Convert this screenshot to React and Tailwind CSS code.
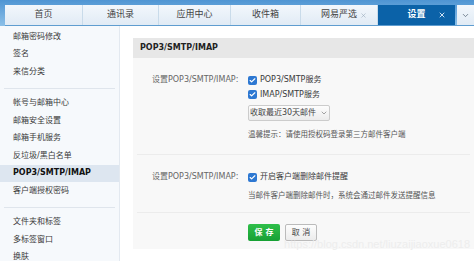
import { ChevronDown, X, Check } from "lucide-react";

const font = { fontFamily: '"DejaVu Sans", "Noto Sans CJK SC", sans-serif' };

const tabs = [
  { name: "首页", w: "w-[78px]" },
  { name: "通讯录", w: "w-[76px]" },
  { name: "应用中心", w: "w-[72px]" },
  { name: "收件箱", w: "w-[70px]" },
  { name: "网易严选", w: "w-[77px]", close: true },
];

const groups = [
  ["邮箱密码修改", "签名", "来信分类"],
  ["帐号与邮箱中心", "邮箱安全设置", "邮箱手机服务", "反垃圾/黑白名单", "POP3/SMTP/IMAP", "客户端授权密码"],
  ["文件夹和标签", "多标签窗口", "换肤"],
];

function Box() {
  return (
    <span className="flex h-[9px] w-[9px] shrink-0 items-center justify-center rounded-[2px] bg-[#2d78d2]">
      <Check size={7} strokeWidth={4} className="text-white" />
    </span>
  );
}

export default function App() {
  return (
    <div style={font} className="h-[261px] w-[474px] overflow-hidden bg-white text-[8px] text-[#3a3a3a]">
      <div className="flex h-[26px] items-end bg-gradient-to-b from-[#4f95d3] to-[#8cc0e8] pl-[5px]">
        <div className="flex h-[21px] flex-1 border-b border-[#5f9dd0]">
          {tabs.map((t) => (
            <div
              key={t.name}
              className={`relative flex ${t.w} items-center justify-center border-r border-[#c9dbea] bg-gradient-to-b from-[#f2f7fc] to-[#e1ebf5] text-[9px] text-[#444]`}
            >
              {t.name}
              {t.close && <X size={7} className="absolute right-[10px] text-[#9ab]" />}
            </div>
          ))}
          <div className="relative flex w-[77px] items-center justify-center bg-[#0b62a8] text-[9px] font-bold text-white">
            设置
            <X size={8} strokeWidth={3} className="absolute right-[9px] text-[#cfe2f3]" />
          </div>
          <div className="ml-[2px] flex flex-1 items-center justify-center bg-gradient-to-b from-[#f2f7fc] to-[#e1ebf5]">
            <ChevronDown size={9} className="text-[#567]" />
          </div>
        </div>
      </div>
      <div className="flex">
        <div className="w-[120px] shrink-0 border-r border-[#e3e9f0] bg-[#f6f9fc] pt-[2px]">
          {groups.map((g, i) => (
            <div key={i} className={i > 0 ? "mx-[4px] border-t border-[#dfe5ec] pt-[6px]" : "mx-[4px]"}>
              {g.map((item) => (
                <div
                  key={item}
                  className={`flex h-[17.5px] items-center whitespace-nowrap pl-[9px] ${
                    item === "POP3/SMTP/IMAP" ? "-mx-[4px] bg-[#dde6f0] pl-[13px] font-bold text-[#111]" : ""
                  }`}
                >
                  {item}
                </div>
              ))}
              {i < 2 && <div className="h-[7px]" />}
            </div>
          ))}
        </div>
        <div className="flex-1 pl-[13px] pt-[12px]">
          <div className="bg-[#f8f8f8]">
            <div className="flex h-[20px] items-center bg-[#e7e7e7] pl-[7px] font-bold text-[#222]">
              POP3/SMTP/IMAP
            </div>
            <div className="flex pt-[15px]">
              <div className="flex h-[14px] w-[115px] items-center whitespace-nowrap pl-[19px] text-[#666]">设置POP3/SMTP/IMAP:</div>
              <div className="flex flex-col whitespace-nowrap">
                <label className="flex h-[14px] items-center gap-[3px]"><Box />POP3/SMTP服务</label>
                <label className="flex h-[15px] items-center gap-[3px]"><Box />IMAP/SMTP服务</label>
                <div className="mt-[3px] flex h-[16px] w-[82px] items-center justify-center gap-[4px] rounded-[2px] border border-[#ccc] bg-gradient-to-b from-[#fdfdfd] to-[#ececec] text-[#444]">
                  收取最近30天邮件 <ChevronDown size={8} className="text-[#777]" />
                </div>
                <div className="mt-[8px] h-[12px] text-[7.5px] text-[#555]">温馨提示：请使用授权码登录第三方邮件客户端</div>
              </div>
            </div>
            <div className="mx-[4px] mt-[13px] border-t border-[#ececec]" />
            <div className="flex pt-[15px]">
              <div className="flex h-[14px] w-[115px] items-center whitespace-nowrap pl-[19px] text-[#666]">设置POP3/SMTP/IMAP:</div>
              <div className="flex flex-col whitespace-nowrap">
                <label className="flex h-[14px] items-center gap-[3px]"><Box />开启客户端删除邮件提醒</label>
                <div className="mt-[6px] h-[12px] text-[7.5px] text-[#555]">当邮件客户端删除邮件时，系统会通过邮件发送提醒信息</div>
              </div>
            </div>
            <div className="mx-[4px] mt-[10px] border-t border-[#ececec]" />
            <div className="relative flex gap-[5px] pb-[8px] pl-[115px] pt-[11px]">
              <button className="h-[17px] w-[32px] rounded-[2px] bg-gradient-to-b from-[#2fbf4a] to-[#16a034] font-bold text-white">保 存</button>
              <button className="h-[17px] w-[32px] rounded-[2px] border border-[#bbb] bg-gradient-to-b from-[#fdfdfd] to-[#ececec] text-[#444]">取 消</button>
              <span style={{ fontFamily: '"Liberation Sans", sans-serif' }} className="absolute bottom-[-3px] right-[4px] text-[11px] text-[#ededed]">
                https://blog.csdn.net/liuzaijiaoxue0618
              </span>
            </div>
          </div>
        </div>
      </div>
    </div>
  );
}
